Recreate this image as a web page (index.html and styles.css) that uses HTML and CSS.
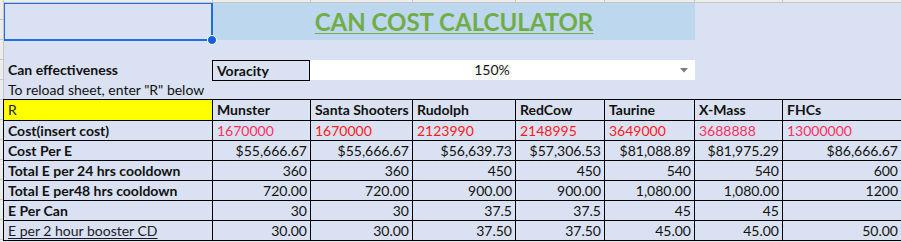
FILE: index.html
```html
<!DOCTYPE html>
<html>
<head>
<meta charset="utf-8">
<link rel="stylesheet" href="styles.css">
</head>
<body>
<div class="sheet">
  <div class="gutter"></div>
  <div class="main">
    <div class="ruler">
      <div></div><div></div><div></div><div></div><div></div><div></div><div></div><div class="last"></div>
    </div>
    <div class="top">
      <div class="sel"><span class="handle"></span></div>
      <div class="title"><span>CAN COST CALCULATOR</span></div>
      <div class="spacer"></div>
      <div class="label b">Can effectiveness</div>
      <div class="voracity b">Voracity</div>
      <div class="dropdown">
        <span class="val">150%</span>
        <svg class="arrow" width="8" height="5" viewBox="0 0 8 5"><polygon points="0,0 8,0 4,4.5" fill="#7a7a7a"/></svg>
      </div>
      <div class="note">To reload sheet, enter "R" below</div>
    </div>
    <div class="table">
      <div class="c h yellow">R</div>
      <div class="c h b">Munster</div>
      <div class="c h b">Santa Shooters</div>
      <div class="c h b">Rudolph</div>
      <div class="c h b">RedCow</div>
      <div class="c h b">Taurine</div>
      <div class="c h b">X-Mass</div>
      <div class="c h b nr">FHCs</div>

      <div class="c b">Cost(insert cost)</div>
      <div class="c red pink">1670000</div>
      <div class="c red">1670000</div>
      <div class="c red">2123990</div>
      <div class="c red">2148995</div>
      <div class="c red">3649000</div>
      <div class="c red pink">3688888</div>
      <div class="c red pink nr">13000000</div>

      <div class="c b">Cost Per E</div>
      <div class="c n">$55,666.67</div>
      <div class="c n">$55,666.67</div>
      <div class="c n">$56,639.73</div>
      <div class="c n">$57,306.53</div>
      <div class="c n">$81,088.89</div>
      <div class="c n">$81,975.29</div>
      <div class="c n nr">$86,666.67</div>

      <div class="c b">Total E per 24 hrs cooldown</div>
      <div class="c n">360</div>
      <div class="c n">360</div>
      <div class="c n">450</div>
      <div class="c n">450</div>
      <div class="c n">540</div>
      <div class="c n">540</div>
      <div class="c n nr">600</div>

      <div class="c b">Total E per48 hrs cooldown</div>
      <div class="c n">720.00</div>
      <div class="c n">720.00</div>
      <div class="c n">900.00</div>
      <div class="c n">900.00</div>
      <div class="c n">1,080.00</div>
      <div class="c n">1,080.00</div>
      <div class="c n nr">1200</div>

      <div class="c b">E Per Can</div>
      <div class="c n">30</div>
      <div class="c n">30</div>
      <div class="c n">37.5</div>
      <div class="c n">37.5</div>
      <div class="c n">45</div>
      <div class="c n">45</div>
      <div class="c n nr"></div>

      <div class="c u">E per 2 hour booster CD</div>
      <div class="c n">30.00</div>
      <div class="c n">30.00</div>
      <div class="c n">37.50</div>
      <div class="c n">37.50</div>
      <div class="c n">45.00</div>
      <div class="c n">45.00</div>
      <div class="c n nr">50.00</div>
    </div>
  </div>
</div>
</body>
</html>
```

FILE: styles.css
```css
html, body {
  margin: 0;
  padding: 0;
  background: #d9e1f2;
}
body {
  font-family: Lato, "Liberation Sans", sans-serif;
  font-size: 14px;
  color: #111;
  width: 901px;
  height: 242px;
  overflow: hidden;
}
.sheet {
  display: flex;
  height: 242px;
}
.gutter {
  width: 3px;
  flex: none;
  background: repeating-linear-gradient(to bottom, #ececec 0 19px, #c8c8c8 19px 20px);
}
.main {
  flex: 1;
  min-width: 0;
}
.ruler {
  display: grid;
  grid-template-columns: 209px 98px 102px 103px 89px 90px 88px 1fr;
  height: 3px;
  box-sizing: border-box;
  background: #ededed;
  border-bottom: 1px solid #c6c6c6;
  border-left: 1px solid #c6c6c6;
}
.ruler div {
  border-right: 1px solid #c6c6c6;
}
.ruler .last {
  border-right: none;
}
.top {
  display: grid;
  grid-template-columns: 209px 98px 102px 103px 89px 90px 88px 1fr;
  grid-template-rows: 37px 20px 20px 19px;
  border-left: 1px solid #c6c6c6;
}
.sel {
  grid-column: 1;
  grid-row: 1;
  position: relative;
  height: 38px;
  box-sizing: border-box;
  border-top: 1px solid #1f6fe0;
  border-left: 1px solid #1f6fe0;
  border-right: 2px solid #1f6fe0;
  border-bottom: 2px solid #1f6fe0;
  z-index: 2;
}
.handle {
  position: absolute;
  right: -6px;
  bottom: -6px;
  width: 8px;
  height: 8px;
  border-radius: 50%;
  background: #1a5fd6;
  border: 1px solid #fff;
}
.title {
  grid-column: 2 / 7;
  grid-row: 1;
  background: #bdd7ee;
  text-align: center;
  font-size: 24px;
  font-weight: 700;
  color: #70ad47;
  line-height: 30px;
  padding-top: 4px;
  box-sizing: border-box;
}
.title span {
  text-decoration: underline;
  text-decoration-thickness: 1px;
  text-underline-offset: 2px;
}
.spacer {
  grid-column: 1 / -1;
  grid-row: 2;
}
.label {
  grid-column: 1;
  grid-row: 3;
  padding-left: 4px;
  line-height: 20px;
  white-space: nowrap;
}
.b {
  font-weight: 700;
}
.voracity {
  grid-column: 2;
  grid-row: 3;
  margin: 0 1px 0 -1px;
  border: 1px solid #000;
  box-sizing: border-box;
  padding-left: 4px;
  line-height: 19px;
  height: 21px;
}
.dropdown {
  grid-column: 3 / 7;
  grid-row: 3;
  background: #fff;
  display: flex;
  align-items: center;
  line-height: 20px;
  margin-left: -1px;
}
.val {
  flex: 1;
  text-align: center;
}
.arrow {
  flex: none;
  margin: 1px 7px 0 6px;
}
.note {
  grid-column: 1 / -1;
  grid-row: 4;
  padding-left: 4px;
  line-height: 19px;
  white-space: nowrap;
}
.table {
  display: grid;
  grid-template-columns: 209px 98px 102px 103px 89px 90px 88px 1fr;
  grid-template-rows: 21px repeat(6, 20px);
  border-top: 1px solid #000;
  border-left: 1px solid #000;
}
.c {
  box-sizing: border-box;
  border-right: 1px solid #000;
  border-bottom: 1px solid #000;
  padding: 0 4px;
  line-height: 19px;
  white-space: nowrap;
  overflow: hidden;
}
.c.h {
  line-height: 20px;
}
.c.nr {
  border-right: none;
}
.yellow {
  background: #ffff00;
  color: #222;
}
.red {
  color: #ff1a1a;
}
.red.pink {
  color: #ff3060;
}
.n {
  text-align: right;
  padding-right: 3px;
}
.u {
  text-decoration: underline;
  text-underline-offset: 2px;
  color: #1a1a2a;
}
```
